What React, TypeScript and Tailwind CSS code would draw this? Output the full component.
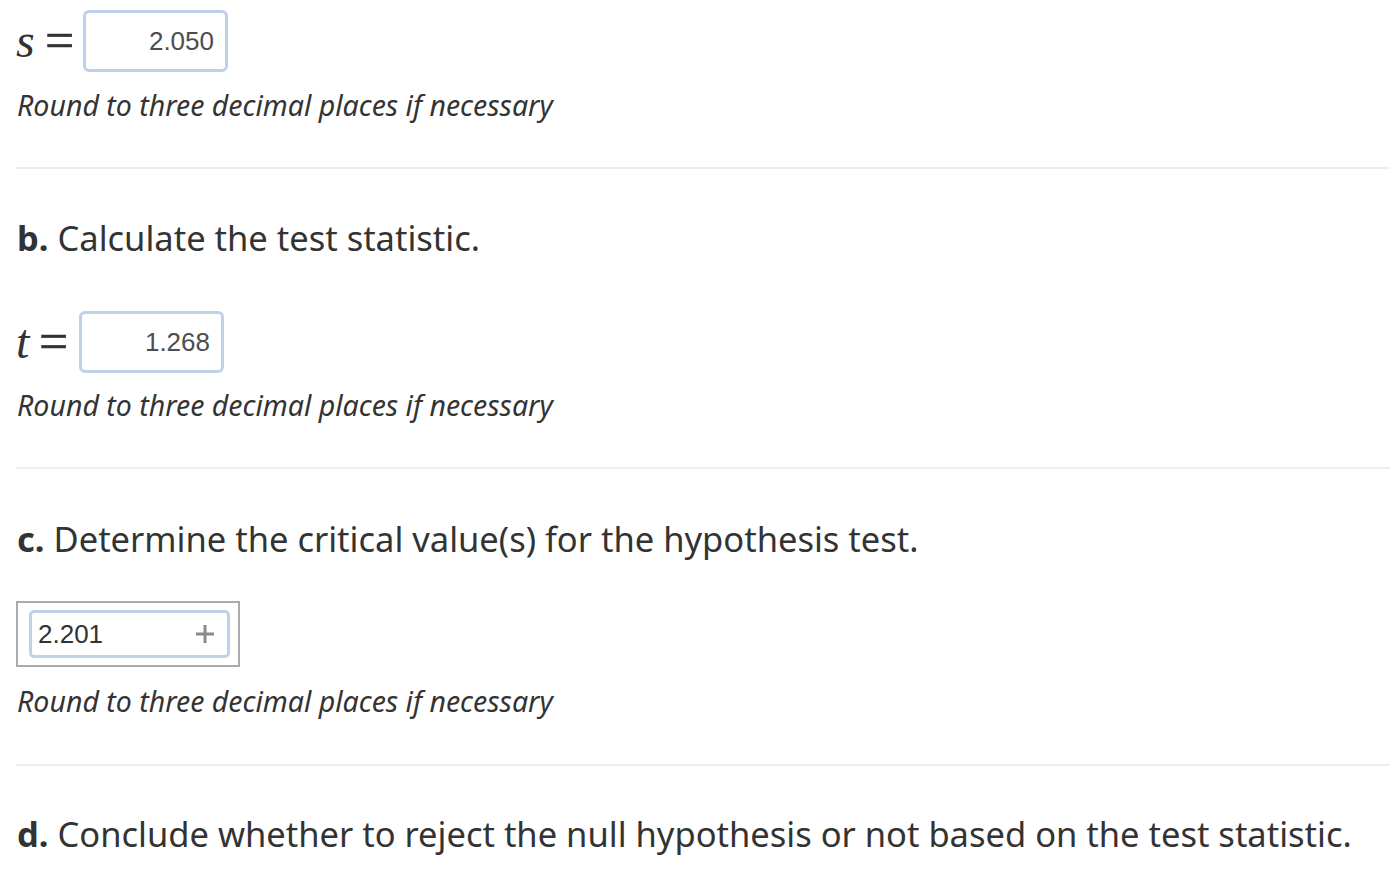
import React from 'react';

function Divider({ className = '' }: { className?: string }) {
  return <div className={`h-[2px] bg-[#eeeeee] ${className}`} />;
}

function Hint({ className = '' }: { className?: string }) {
  return (
    <p className={`italic text-[28.5px] leading-[38px] pl-[1px] ${className}`}>
      Round to three decimal places if necessary
    </p>
  );
}

function Heading({ label, text, className = '' }: { label: string; text: string; className?: string }) {
  return (
    <h2 className={`text-[34.5px] leading-[44px] pl-[1px] ${className}`}>
      <span className="font-bold">{label}</span> {text}
    </h2>
  );
}

function MathInput({ symbol, value, symbolW, inputGap }: { symbol: string; value: string; symbolW: string; inputGap: string }) {
  return (
    <div className="flex items-center h-[62px] font-['Liberation_Serif',serif]">
      <span className={`italic text-[48px] leading-none ${symbolW}`}>{symbol}</span>
      <span className="w-[26px] text-center text-[52px] leading-none [-webkit-text-stroke:0.5px_#333333]">=</span>
      <div className={`${inputGap} w-[145px] h-[62px] border-[3px] border-[#bdd1ea] rounded-[6px] flex items-center justify-end pr-[11px] font-['Liberation_Sans',sans-serif] text-[26px] text-[#4d4d4d]`}>
        {value}
      </div>
    </div>
  );
}

export default function App() {
  return (
    <div className="pl-4 pt-[10px] font-['Noto_Sans',sans-serif] text-[#333333] bg-white min-h-[892px]">
      {/* part a, tail */}
      <MathInput symbol="s" value="2.050" symbolW="w-[29px]" inputGap="ml-[12px]" />
      <Hint className="mt-[14px]" />
      <Divider className="mt-[43px]" />

      {/* part b */}
      <Heading label="b." text="Calculate the test statistic." className="mt-[47px]" />
      <div className="mt-[51px]">
        <MathInput symbol="t" value="1.268" symbolW="w-[23px]" inputGap="ml-[14px]" />
      </div>
      <Hint className="mt-[13px]" />
      <Divider className="mt-[43px]" />

      {/* part c */}
      <Heading label="c." text="Determine the critical value(s) for the hypothesis test." className="mt-[48px]" />
      <div className="mt-[40px] w-[224px] h-[66px] border-2 border-[#aaaaaa] pl-[11px] pr-[8px] pt-[7px]">
        <div className="w-[201px] h-[48px] border-[3px] border-[#bdd1ea] rounded-[5px] flex items-center justify-between pl-[6px] pr-[12px] font-['Liberation_Sans',sans-serif] text-[26px] text-[#333333]">
          <span>2.201</span>
          <svg width="20" height="20" viewBox="0 0 20 20" className="text-[#8a8a8a]">
            <path d="M10 1v18M1 10h18" stroke="currentColor" strokeWidth="3" />
          </svg>
        </div>
      </div>
      <Hint className="mt-[15px]" />
      <Divider className="mt-[44px]" />

      {/* part d */}
      <Heading
        label="d."
        text="Conclude whether to reject the null hypothesis or not based on the test statistic."
        className="mt-[46px]"
      />
    </div>
  );
}
